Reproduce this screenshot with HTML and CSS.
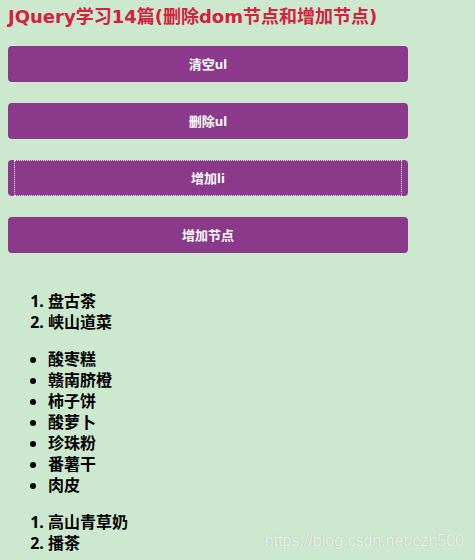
FILE: index.html
```html
<!DOCTYPE html>
<html lang="zh-CN">
<head>
<meta charset="utf-8">
<title>JQuery学习14篇</title>
<link rel="stylesheet" href="styles.css">
</head>
<body>
<h3 class="title">JQuery学习14篇(删除dom节点和增加节点)</h3>
<div class="buttons">
  <button class="btn">清空ul</button>
  <button class="btn">删除ul</button>
  <button class="btn btn-focus">增加li</button>
  <button class="btn">增加节点</button>
</div>
<ol class="list list-first">
  <li>盘古茶</li>
  <li>峡山道菜</li>
</ol>
<ul class="list">
  <li>酸枣糕</li>
  <li>赣南脐橙</li>
  <li>柿子饼</li>
  <li>酸萝卜</li>
  <li>珍珠粉</li>
  <li>番薯干</li>
  <li>肉皮</li>
</ul>
<ol class="list">
  <li>高山青草奶</li>
  <li>播茶</li>
</ol>
<div class="watermark">https://blog.csdn.net/czh500</div>
</body>
</html>
```
FILE: styles.css
```css
html, body {
  margin: 0;
  padding: 0;
}
body {
  background: #cce8cf;
  padding: 0 8px;
  height: 560px;
  overflow: hidden;
  position: relative;
  font-family: "Noto Sans", "Noto Sans CJK SC", sans-serif;
  color: #000;
}
.title {
  margin: 5px 0 0 0;
  font-family: "DejaVu Sans", "Noto Sans CJK SC", sans-serif;
  font-size: 18px;
  line-height: 24px;
  font-weight: bold;
  color: #d4213d;
}
.buttons {
  display: flex;
  flex-direction: column;
  gap: 21px;
  margin-top: 17px;
}
.btn {
  position: relative;
  width: 400px;
  height: 36px;
  margin: 0;
  padding: 0;
  border: none;
  border-radius: 4px;
  background: #8b3a8b;
  color: #fff;
  font-family: "Noto Sans", "Noto Sans CJK SC", sans-serif;
  font-weight: bold;
  font-size: 13px;
  line-height: 36px;
  text-align: center;
}
.btn-focus::after {
  content: "";
  position: absolute;
  left: 6px;
  right: 6px;
  top: 0;
  bottom: 0;
  border: 1px dotted #fff;
}
.list {
  margin: 16px 0;
  padding-left: 40px;
  font-size: 16px;
  font-weight: bold;
  line-height: 21px;
}
.list-first {
  margin-top: 38px;
}
.watermark {
  position: absolute;
  right: 11px;
  bottom: 10px;
  font-family: "Liberation Sans", Arial, sans-serif;
  font-size: 16px;
  line-height: 18px;
  color: rgba(255, 255, 255, 0.75);
  text-shadow: 0 0 1px rgba(120, 140, 120, 0.5);
}
```
